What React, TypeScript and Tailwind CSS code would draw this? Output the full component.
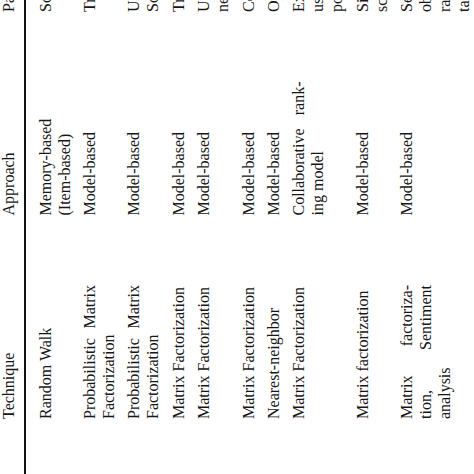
type Line = string | string[];

type Row = {
  technique: Line[];
  approach: Line[];
  params: Line[];
};

// the right-hand column is cut off by the crop, only its first letters show
const ROWS: Row[] = [
  { technique: ['Random Walk'], approach: ['Memory-based', '(Item-based)'], params: ['Social relations'] },
  { technique: [['Probabilistic', 'Matrix'], 'Factorization'], approach: ['Model-based'], params: ['Trust relationships'] },
  { technique: [['Probabilistic', 'Matrix'], 'Factorization'], approach: ['Model-based'], params: ['User ratings,', 'Social trust'] },
  { technique: ['Matrix Factorization'], approach: ['Model-based'], params: ['Trust propagation'] },
  { technique: ['Matrix Factorization'], approach: ['Model-based'], params: ['User-item ratings,', 'neighborhood'] },
  { technique: ['Matrix Factorization'], approach: ['Model-based'], params: ['Contextual information'] },
  { technique: ['Nearest-neighbor'], approach: ['Model-based'], params: ['Opinions of users'] },
  {
    technique: ['Matrix Factorization'],
    approach: [['Collaborative', 'rank-'], 'ing model'],
    params: ['Explicit feedback,', 'user preferences,', 'popularity'],
  },
  { technique: ['Matrix factorization'], approach: ['Model-based'], params: ['Similarity', 'scores'] },
  {
    technique: [['Matrix', 'factoriza-'], ['tion,', 'Sentiment'], 'analysis'],
    approach: ['Model-based'],
    params: ['Sentiment scores', 'obtained from', 'ratings and', 'tags'],
  },
];

function Cell({ lines }: { lines: Line[] }) {
  return (
    <div>
      {lines.map((line, i) =>
        Array.isArray(line) ? (
          // justified line, as in the typeset table
          <div key={i} className="flex justify-between whitespace-nowrap">
            {line.map((w) => (
              <span key={w}>{w}</span>
            ))}
          </div>
        ) : (
          <div key={i} className="whitespace-nowrap">
            {line}
          </div>
        ),
      )}
    </div>
  );
}

const GRID = 'grid grid-cols-[134px_134px_134px] gap-x-[69.5px] w-max pl-[55px]';

export default function App() {
  return (
    <div className="w-[474px] h-[474px] overflow-hidden bg-white">
      <div className="w-[474px] h-[474px] -rotate-90 overflow-hidden font-['Liberation_Serif',serif] text-[16px] leading-[19px] text-[#161616]">
        {/* Header */}
        <div className={`${GRID} -mt-[1px]`}>
          <div>Technique</div>
          <div>Approach</div>
          <div>Parameters</div>
        </div>

        <div className="mt-[6.3px] h-[1.5px] w-[600px] bg-[#111]" />

        {/* Body */}
        <div className="pt-[6.7px]">
          {ROWS.map((row, i) => (
            <div key={i} className={`${GRID} py-[3.2px]`}>
              <Cell lines={row.technique} />
              <Cell lines={row.approach} />
              <Cell lines={row.params} />
            </div>
          ))}
        </div>
      </div>
    </div>
  );
}
